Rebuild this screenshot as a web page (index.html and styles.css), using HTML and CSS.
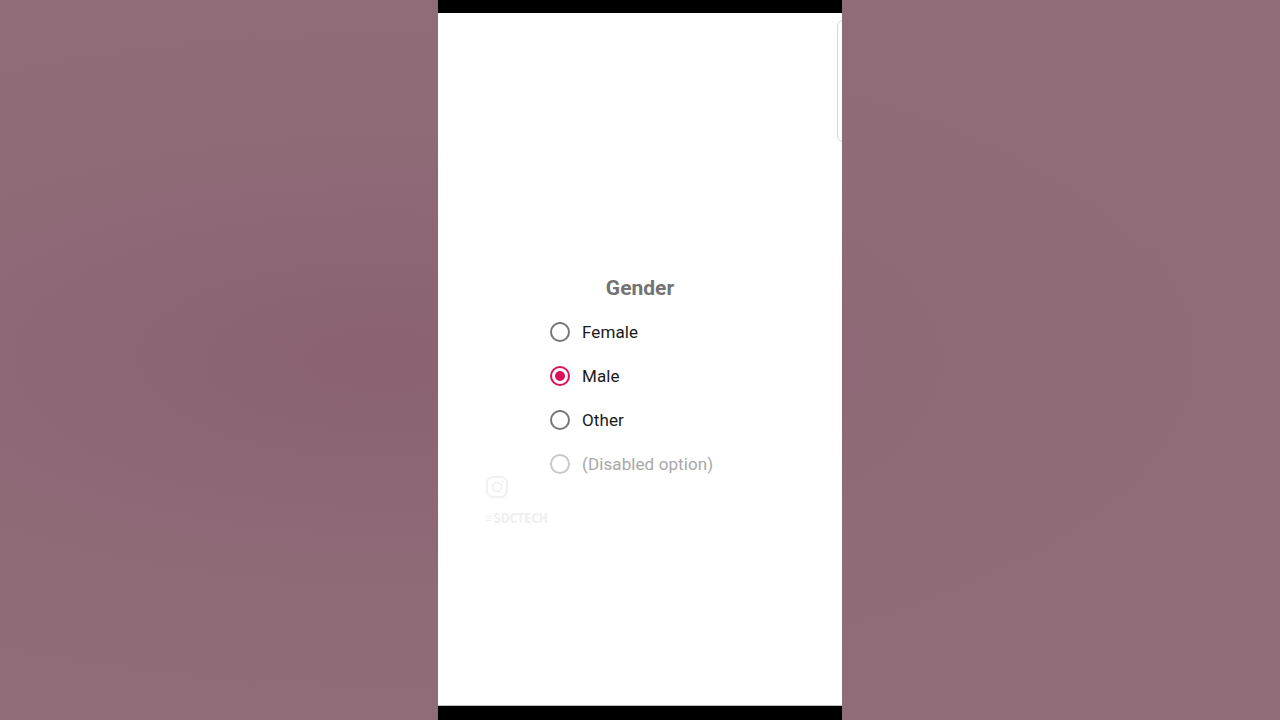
FILE: index.html
```html
<!DOCTYPE html>
<html lang="en">
<head>
<meta charset="utf-8">
<title>Gender</title>
<link rel="stylesheet" href="styles.css">
</head>
<body>
<div class="stage">
  <div class="phone">
    <div class="bar bar-top"></div>
    <div class="screen">
      <div class="scroll-thumb"></div>
      <div class="watermark">
        <svg class="wm-icon" viewBox="0 0 24 24" width="24" height="24">
          <rect x="2" y="2" width="20" height="20" rx="6" fill="none" stroke="#f1f1f1" stroke-width="2"/>
          <circle cx="12" cy="12" r="4.5" fill="none" stroke="#f1f1f1" stroke-width="2"/>
          <circle cx="17.5" cy="6.5" r="1.2" fill="#f1f1f1"/>
        </svg>
        <span class="wm-text"><span class="wm-mark">≡</span>SDCTECH</span>
      </div>
      <div class="form">
        <h2 class="title">Gender</h2>
        <div class="group">
          <label class="option"><span class="radio"></span><span class="label">Female</span></label>
          <label class="option"><span class="radio checked"></span><span class="label">Male</span></label>
          <label class="option"><span class="radio"></span><span class="label">Other</span></label>
          <label class="option disabled"><span class="radio"></span><span class="label">(Disabled option)</span></label>
        </div>
      </div>
    </div>
    <div class="bar bar-bottom"></div>
  </div>
</div>
</body>
</html>
```

FILE: styles.css
```css
html, body {
  margin: 0;
  padding: 0;
  height: 100%;
}
body {
  background: #8f6a77;
  font-family: Roboto, "Noto Sans", "Liberation Sans", sans-serif;
}
.stage {
  height: 720px;
  display: flex;
  justify-content: center;
  background: radial-gradient(ellipse at 30% 50%, #8a6272 0%, #8f6a77 45%, #916c79 100%);
}
.phone {
  width: 404px;
  height: 720px;
  display: flex;
  flex-direction: column;
  background: #fff;
}
.bar {
  background: #000;
}
.bar-top {
  height: 13px;
}
.bar-bottom {
  height: 14px;
  border-top: 1px solid #bdbdbd;
}
.screen {
  flex: 1;
  position: relative;
  overflow: hidden;
  background: #fff;
}
.scroll-thumb {
  position: absolute;
  left: 399px;
  top: 7px;
  width: 12px;
  height: 122px;
  border: 1px solid #d6d6d6;
  border-radius: 6px;
  box-sizing: border-box;
}
.watermark {
  position: absolute;
  left: 47px;
  top: 462px;
  display: flex;
  flex-direction: column;
  align-items: flex-start;
  gap: 12px;
}
.wm-icon {
  display: block;
}
.wm-text {
  font-family: "DejaVu Sans Condensed", "DejaVu Sans", sans-serif;
  font-stretch: condensed;
  font-size: 12px;
  line-height: 14px;
  font-weight: 700;
  color: #f0f0f0;
  display: flex;
  align-items: center;
  letter-spacing: -0.3px;
  transform: scaleY(1.2);
  transform-origin: left center;
}
.wm-mark {
  font-size: 10px;
  font-weight: 400;
  margin-right: 1px;
}
.form {
  padding-top: 263px;
  display: flex;
  flex-direction: column;
  align-items: center;
}
.title {
  margin: 0;
  font-size: 21px;
  line-height: 24px;
  font-weight: 700;
  color: #737373;
}
.group {
  width: 180px;
  margin-top: 10px;
  display: flex;
  flex-direction: column;
}
.option {
  height: 44px;
  display: flex;
  align-items: center;
  gap: 12px;
}
.radio {
  width: 20px;
  height: 20px;
  box-sizing: border-box;
  border: 2px solid #757575;
  border-radius: 50%;
  display: flex;
  align-items: center;
  justify-content: center;
  flex: none;
}
.radio.checked {
  border-color: #dc0f5a;
}
.radio.checked::after {
  content: "";
  width: 10px;
  height: 10px;
  border-radius: 50%;
  background: #dc0f5a;
}
.label {
  font-size: 17px;
  color: #1a1a1a;
  letter-spacing: 0.1px;
}
.option.disabled .radio {
  border-color: #c8c8c8;
}
.option.disabled .label {
  color: #a8a8a8;
}
```
